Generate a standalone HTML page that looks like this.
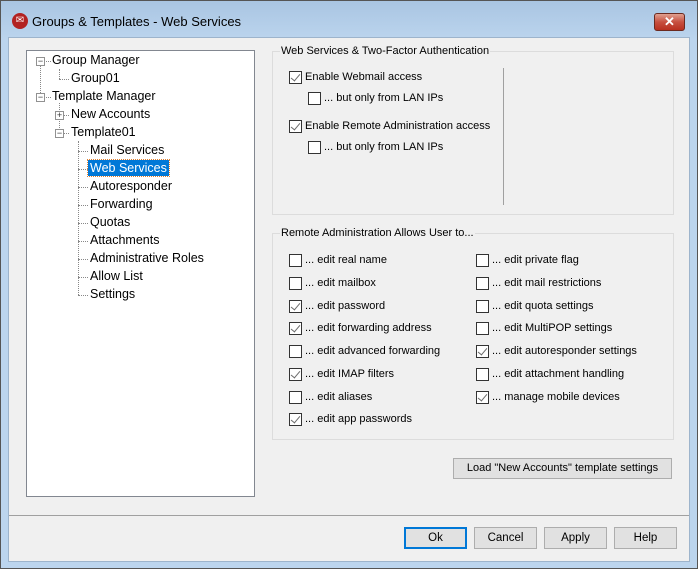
<!DOCTYPE html>
<html><head><style>
*{margin:0;padding:0;box-sizing:border-box}
body{width:698px;height:569px;overflow:hidden;background:#fff;font-family:"Liberation Sans",sans-serif;position:relative}
.a{position:absolute}
.frame{left:0;top:0;width:698px;height:569px;background:linear-gradient(#a9c5e2,#bcd5ee 40px,#bcd5ee);border:1px solid #555}
.client{left:8px;top:37px;width:682px;height:525px;background:#f0f0f0;border:1px solid #9db4cc}
.t{font-size:12.5px;color:#000;white-space:nowrap}
.s{font-size:11px;color:#000;white-space:nowrap}
.exp{width:9px;height:9px;border:1px solid #919191;background:#fff;font-size:9px;line-height:7px;text-align:center;color:#333}
.dv{border-left:1px dotted #888;width:0}
.dh{border-top:1px dotted #888;height:0}
.cb{width:13px;height:13px;border:1px solid #333;background:#fff}
.cb.c::after{content:"";position:absolute;left:3px;top:0px;width:4px;height:8px;border:solid #6b6b6b;border-width:0 1.5px 1.5px 0;transform:rotate(40deg)}
.grp{border:1px solid #dcdcdc}
.btn{background:#e1e1e1;border:1px solid #adadad;font-size:11.5px;text-align:center;line-height:20px}
</style></head><body>
<div class="a frame"></div>
<div class="a" style="left:12px;top:13px;width:16px;height:16px;border-radius:50%;background:#b22222;color:#fff;font-size:10px;text-align:center;line-height:16px">✉</div>
<div class="a t" style="left:32px;top:14px;font-size:13px">Groups &amp; Templates - Web Services</div>
<div class="a" style="left:654px;top:13px;width:31px;height:18px;background:linear-gradient(#e0a090,#c75040 50%,#b83020);border:1px solid #6b2a20;border-radius:3px;color:#fff;font-weight:bold;text-align:center;font-size:13px;line-height:16px">✕</div>
<div class="a client"></div>

<div class="a" style="left:26px;top:50px;width:229px;height:447px;background:#fff;border:1px solid #828790"></div>
<div class="a dv" style="left:40px;top:65px;height:28px"></div>
<div class="a dh" style="left:46px;top:61px;width:5px"></div>
<div class="a dv" style="left:59px;top:69px;height:10px"></div>
<div class="a dh" style="left:59px;top:79px;width:10px"></div>
<div class="a dh" style="left:46px;top:97px;width:5px"></div>
<div class="a dv" style="left:59px;top:103px;height:25px"></div>
<div class="a dh" style="left:64px;top:115px;width:5px"></div>
<div class="a dh" style="left:64px;top:133px;width:5px"></div>
<div class="a dv" style="left:78px;top:141px;height:154px"></div>
<div class="a dh" style="left:78px;top:151px;width:10px"></div>
<div class="a dh" style="left:78px;top:169px;width:10px"></div>
<div class="a dh" style="left:78px;top:187px;width:10px"></div>
<div class="a dh" style="left:78px;top:205px;width:10px"></div>
<div class="a dh" style="left:78px;top:223px;width:10px"></div>
<div class="a dh" style="left:78px;top:241px;width:10px"></div>
<div class="a dh" style="left:78px;top:259px;width:10px"></div>
<div class="a dh" style="left:78px;top:277px;width:10px"></div>
<div class="a dh" style="left:78px;top:295px;width:10px"></div>
<div class="a exp" style="left:36px;top:57px">−</div>
<div class="a exp" style="left:36px;top:93px">−</div>
<div class="a exp" style="left:55px;top:111px">+</div>
<div class="a exp" style="left:55px;top:129px">−</div>
<div class="a t" style="left:52px;top:53px">Group Manager</div>
<div class="a t" style="left:71px;top:71px">Group01</div>
<div class="a t" style="left:52px;top:89px">Template Manager</div>
<div class="a t" style="left:71px;top:107px">New Accounts</div>
<div class="a t" style="left:71px;top:125px">Template01</div>
<div class="a t" style="left:90px;top:143px">Mail Services</div>
<div class="a t" style="left:88px;top:160px;background:#0078d7;color:#fff;padding:1px 2px;outline:1px dotted #e08030">Web Services</div>
<div class="a t" style="left:90px;top:179px">Autoresponder</div>
<div class="a t" style="left:90px;top:197px">Forwarding</div>
<div class="a t" style="left:90px;top:215px">Quotas</div>
<div class="a t" style="left:90px;top:233px">Attachments</div>
<div class="a t" style="left:90px;top:251px">Administrative Roles</div>
<div class="a t" style="left:90px;top:269px">Allow List</div>
<div class="a t" style="left:90px;top:287px">Settings</div>

<div class="a grp" style="left:272px;top:51px;width:402px;height:164px"></div>
<div class="a s" style="left:280px;top:45px;background:#f0f0f0;padding:0 1px">Web Services &amp; Two-Factor Authentication</div>
<div class="a" style="left:503px;top:68px;width:1px;height:137px;background:#a0a0a0"></div>
<div class="a cb c" style="left:289px;top:71px"></div><div class="a s" style="left:305px;top:71px">Enable Webmail access</div>
<div class="a cb" style="left:308px;top:92px"></div><div class="a s" style="left:324px;top:92px">... but only from LAN IPs</div>
<div class="a cb c" style="left:289px;top:120px"></div><div class="a s" style="left:305px;top:120px">Enable Remote Administration access</div>
<div class="a cb" style="left:308px;top:141px"></div><div class="a s" style="left:324px;top:141px">... but only from LAN IPs</div>

<div class="a grp" style="left:272px;top:233px;width:402px;height:207px"></div>
<div class="a s" style="left:280px;top:227px;background:#f0f0f0;padding:0 1px">Remote Administration Allows User to...</div>
<div class="a cb" style="left:289px;top:254px"></div><div class="a s" style="left:305px;top:254px">... edit real name</div>
<div class="a cb" style="left:289px;top:277px"></div><div class="a s" style="left:305px;top:277px">... edit mailbox</div>
<div class="a cb c" style="left:289px;top:300px"></div><div class="a s" style="left:305px;top:300px">... edit password</div>
<div class="a cb c" style="left:289px;top:322px"></div><div class="a s" style="left:305px;top:322px">... edit forwarding address</div>
<div class="a cb" style="left:289px;top:345px"></div><div class="a s" style="left:305px;top:345px">... edit advanced forwarding</div>
<div class="a cb c" style="left:289px;top:368px"></div><div class="a s" style="left:305px;top:368px">... edit IMAP filters</div>
<div class="a cb" style="left:289px;top:391px"></div><div class="a s" style="left:305px;top:391px">... edit aliases</div>
<div class="a cb c" style="left:289px;top:413px"></div><div class="a s" style="left:305px;top:413px">... edit app passwords</div>
<div class="a cb" style="left:476px;top:254px"></div><div class="a s" style="left:492px;top:254px">... edit private flag</div>
<div class="a cb" style="left:476px;top:277px"></div><div class="a s" style="left:492px;top:277px">... edit mail restrictions</div>
<div class="a cb" style="left:476px;top:300px"></div><div class="a s" style="left:492px;top:300px">... edit quota settings</div>
<div class="a cb" style="left:476px;top:322px"></div><div class="a s" style="left:492px;top:322px">... edit MultiPOP settings</div>
<div class="a cb c" style="left:476px;top:345px"></div><div class="a s" style="left:492px;top:345px">... edit autoresponder settings</div>
<div class="a cb" style="left:476px;top:368px"></div><div class="a s" style="left:492px;top:368px">... edit attachment handling</div>
<div class="a cb c" style="left:476px;top:391px"></div><div class="a s" style="left:492px;top:391px">... manage mobile devices</div>

<div class="a btn" style="left:453px;top:458px;width:219px;height:21px;font-size:11px;line-height:19px">Load "New Accounts" template settings</div>
<div class="a" style="left:9px;top:515px;width:680px;height:1px;background:#a0a0a0"></div>
<div class="a btn" style="left:404px;top:527px;width:63px;height:22px;border:2px solid #0078d7;line-height:18px">Ok</div>
<div class="a btn" style="left:474px;top:527px;width:63px;height:22px">Cancel</div>
<div class="a btn" style="left:544px;top:527px;width:63px;height:22px">Apply</div>
<div class="a btn" style="left:614px;top:527px;width:63px;height:22px">Help</div>
</body></html>
